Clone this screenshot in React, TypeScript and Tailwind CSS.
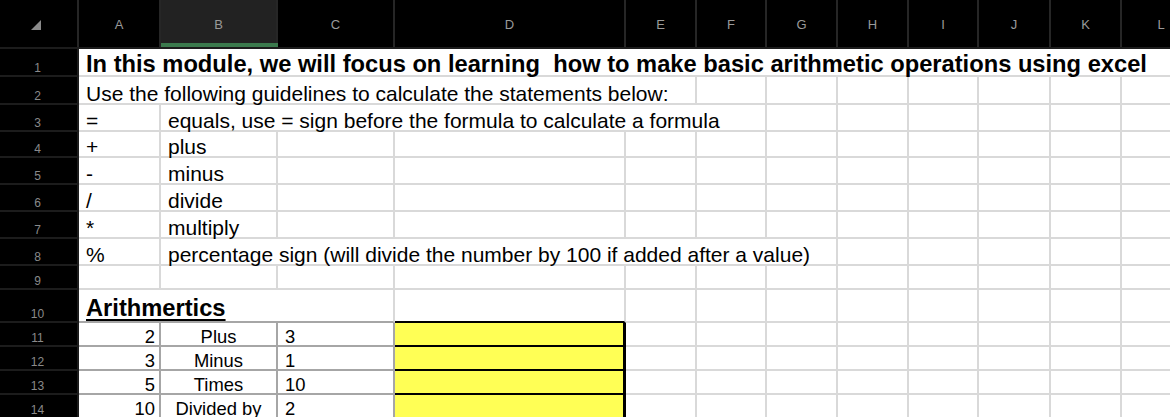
import React from "react";

const COLS = [82, 117, 117, 231, 71, 70, 71, 71, 70, 72, 71, 80];
const LETTERS = ["A", "B", "C", "D", "E", "F", "G", "H", "I", "J", "K", "L"];
const HEIGHTS = [28, 28, 27, 26, 27, 27, 27, 27, 24, 33, 24, 24, 24, 24];

type Cell = {
  span?: number;
  text?: React.ReactNode;
  cls?: string;
  align?: "left" | "right" | "center";
};

const sum = (from: number, n: number) =>
  COLS.slice(from, from + n).reduce((a, b) => a + b, 0);

function Row({ idx, cells }: { idx: number; cells: Cell[] }) {
  let col = 0;
  const h = HEIGHTS[idx];
  return (
    <div className="flex shrink-0" style={{ height: h }}>
      <div className="w-[79px] shrink-0 bg-black border-r-2 border-b-2 border-[#1c1c1c] flex items-end justify-center pb-[1px] pr-[2px] text-[12px] leading-none text-[#8a8a8a]">
        {idx + 1}
      </div>
      {cells.map((c, i) => {
        const span = c.span ?? 1;
        const w = sum(col, span);
        col += span;
        const al =
          c.align === "right"
            ? "justify-end pr-[4px]"
            : c.align === "center"
            ? "justify-center"
            : "justify-start pl-[7px]";
        return (
          <div
            key={i}
            className={`shrink-0 flex items-end overflow-visible whitespace-nowrap border-r-2 border-b-2 ${al} ${
              c.cls ?? "border-[#d9d9d9] bg-white"
            }`}
            style={{ width: w }}
          >
            {c.text}
          </div>
        );
      })}
    </div>
  );
}

const empties = (n: number): Cell[] => Array.from({ length: n }, () => ({}));

export default function App() {
  const t21 = "relative z-10 text-[21px] leading-none text-black mb-[-1px]";
  const t18 = "relative z-10 text-[18.4px] leading-none text-black mb-[-1px]";
  const rows: Cell[][] = [
    [
      {
        span: 12,
        cls: "border-[#d9d9d9] border-r-0 bg-white",
        text: (
          <span className="relative z-10 text-[23.7px] leading-none font-bold text-black mb-[-2px]">
            In this module, we will focus on learning{"\u00a0"} how to make basic arithmetic operations using excel
          </span>
        ),
      },
    ],
    [
      {
        span: 5,
        text: <span className={t21}>Use the following guidelines to calculate the statements below:</span>,
      },
      ...empties(7),
    ],
    [
      { text: <span className={t21}>=</span> },
      {
        span: 5,
        text: <span className={t21}>equals, use = sign before the formula to calculate a formula</span>,
      },
      ...empties(6),
    ],
    [{ text: <span className={t21}>+</span> }, { text: <span className={t21}>plus</span> }, ...empties(10)],
    [{ text: <span className={t21}>-</span> }, { text: <span className={t21}>minus</span> }, ...empties(10)],
    [{ text: <span className={t21}>/</span> }, { text: <span className={t21}>divide</span> }, ...empties(10)],
    [{ text: <span className={t21}>*</span> }, { text: <span className={t21}>multiply</span> }, ...empties(10)],
    [
      { text: <span className={t21}>%</span> },
      {
        span: 6,
        text: (
          <span className={t21}>percentage sign (will divide the number by 100 if added after a value)</span>
        ),
      },
      ...empties(5),
    ],
    empties(12),
    [
      {
        span: 3,
        cls: "border-[#a6a6a6] bg-white border-r-[#d9d9d9]",
        text: (
          <span className="relative z-10 text-[23.7px] leading-none font-bold underline underline-offset-[3px] decoration-2 text-black mb-[0px]">
            Arithmertics
          </span>
        ),
      },
      { cls: "border-[#d9d9d9] border-b-black bg-white" },
      ...empties(8),
    ],
  ];

  const data: [string, string, string][] = [
    ["2", "Plus", "3"],
    ["3", "Minus", "1"],
    ["5", "Times", "10"],
    ["10", "Divided by", "2"],
  ];
  const g = "border-[#a6a6a6] bg-white";
  data.forEach((d) => {
    rows.push([
      { align: "right", cls: g, text: <span className={t18}>{d[0]}</span> },
      { align: "center", cls: g, text: <span className={t18}>{d[1]}</span> },
      { cls: g, text: <span className={t18}>{d[2]}</span> },
      { cls: "border-black border-r-[3px] bg-[#ffff55]" },
      ...empties(8),
    ]);
  });

  return (
    <div
      className="w-[1170px] h-[417px] overflow-hidden bg-white flex flex-col"
      style={{ fontFamily: '"Liberation Sans", Arial, sans-serif' }}
    >
      {/* column header */}
      <div className="flex h-[49px] shrink-0 bg-black border-b-2 border-[#1c1c1c]">
        <div className="w-[79px] shrink-0 border-r-2 border-[#262626] flex items-center justify-center">
          <svg width="12" height="12" viewBox="0 0 12 12" className="ml-[-6px] mt-[2px]">
            <polygon points="11,1 11,11 1,11" fill="#8a8a8a" />
          </svg>
        </div>
        {COLS.map((w, i) => (
          <div
            key={i}
            className={`shrink-0 relative flex items-center justify-center border-r-2 border-[#262626] text-[13px] text-[#9a9a9a] ${
              i === 1 ? "bg-[#222222]" : "bg-black"
            }`}
            style={{ width: w }}
          >
            <span className="mt-[3px]">{LETTERS[i]}</span>
            {i === 1 && <div className="absolute left-0 right-[-2px] bottom-0 h-[4px] bg-[#3b7a4d]" />}
          </div>
        ))}
      </div>
      {rows.map((cells, i) => (
        <Row key={i} idx={i} cells={cells} />
      ))}
    </div>
  );
}
